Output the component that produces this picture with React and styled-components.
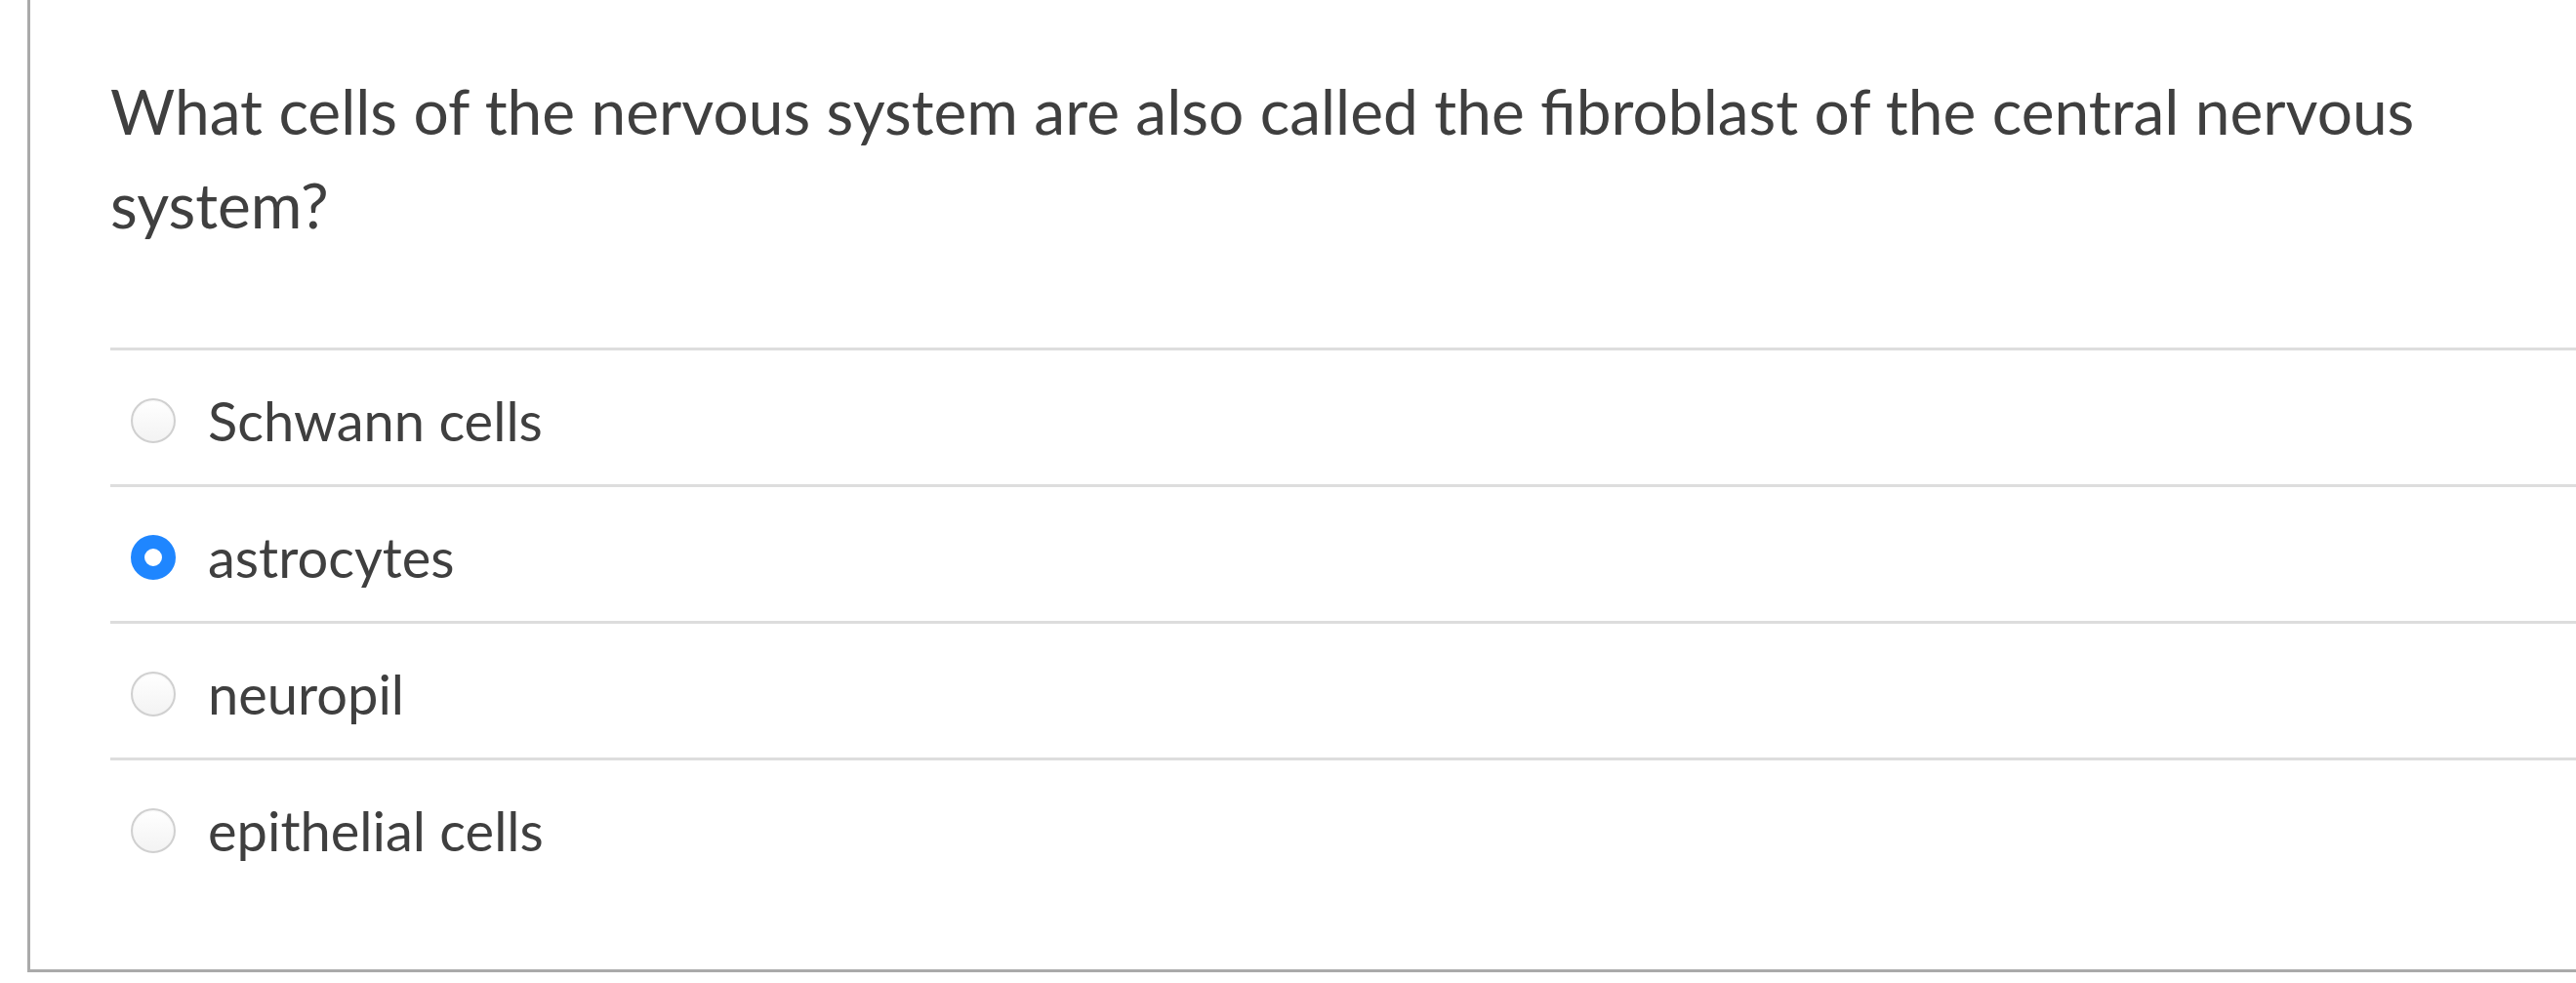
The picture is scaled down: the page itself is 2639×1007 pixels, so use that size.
import React from 'react'
import styled, { createGlobalStyle } from 'styled-components'

const GlobalStyle = createGlobalStyle`
  html, body {
    margin: 0;
    padding: 0;
    background: #fff;
    overflow: hidden;
  }
  body {
    font-family: Lato, "Open Sans", "Liberation Sans", sans-serif;
    color: #3f3f3f;
  }
`

const Card = styled.section`
  margin-left: 28px;
  border-left: 3px solid #aaaaaa;
  border-bottom: 3px solid #aaaaaa;
  padding: 66px 0 77px 82px;
`

const Question = styled.p`
  margin: 0 0 98px;
  font-size: 64px;
  line-height: 96px;
  padding-right: 40px;
`

const Answers = styled.div`
  display: flex;
  flex-direction: column;
`

const Answer = styled.label`
  box-sizing: border-box;
  height: 140px;
  padding-top: 6px;
  border-top: 3px solid #dddddd;
  display: flex;
  align-items: center;
  gap: 33px;
  padding-left: 21px;
  font-size: 56px;
`

const Radio = styled.input.attrs({ type: 'radio' })`
  appearance: none;
  margin: 0;
  width: 46px;
  height: 46px;
  border-radius: 50%;
  box-sizing: border-box;
  border: 2px solid #d0d0d0;
  background: linear-gradient(#ffffff, #f3f3f3);
  box-shadow: inset 0 1px 2px rgba(0, 0, 0, 0.04);
  flex-shrink: 0;

  &:checked {
    border: 14px solid #1f86ff;
    background: #fff;
    box-shadow: none;
  }
`

export default function App() {
  const answers = ['Schwann cells', 'astrocytes', 'neuropil', 'epithelial cells']

  return (
    <>
      <GlobalStyle />
      <Card>
        <Question>
          What cells of the nervous system are also called the fibroblast of the central nervous system?
        </Question>
        <Answers>
          {answers.map((text) => (
            <Answer key={text}>
              <Radio name="answer" defaultChecked={text === 'astrocytes'} readOnly />
              {text}
            </Answer>
          ))}
        </Answers>
      </Card>
    </>
  )
}
